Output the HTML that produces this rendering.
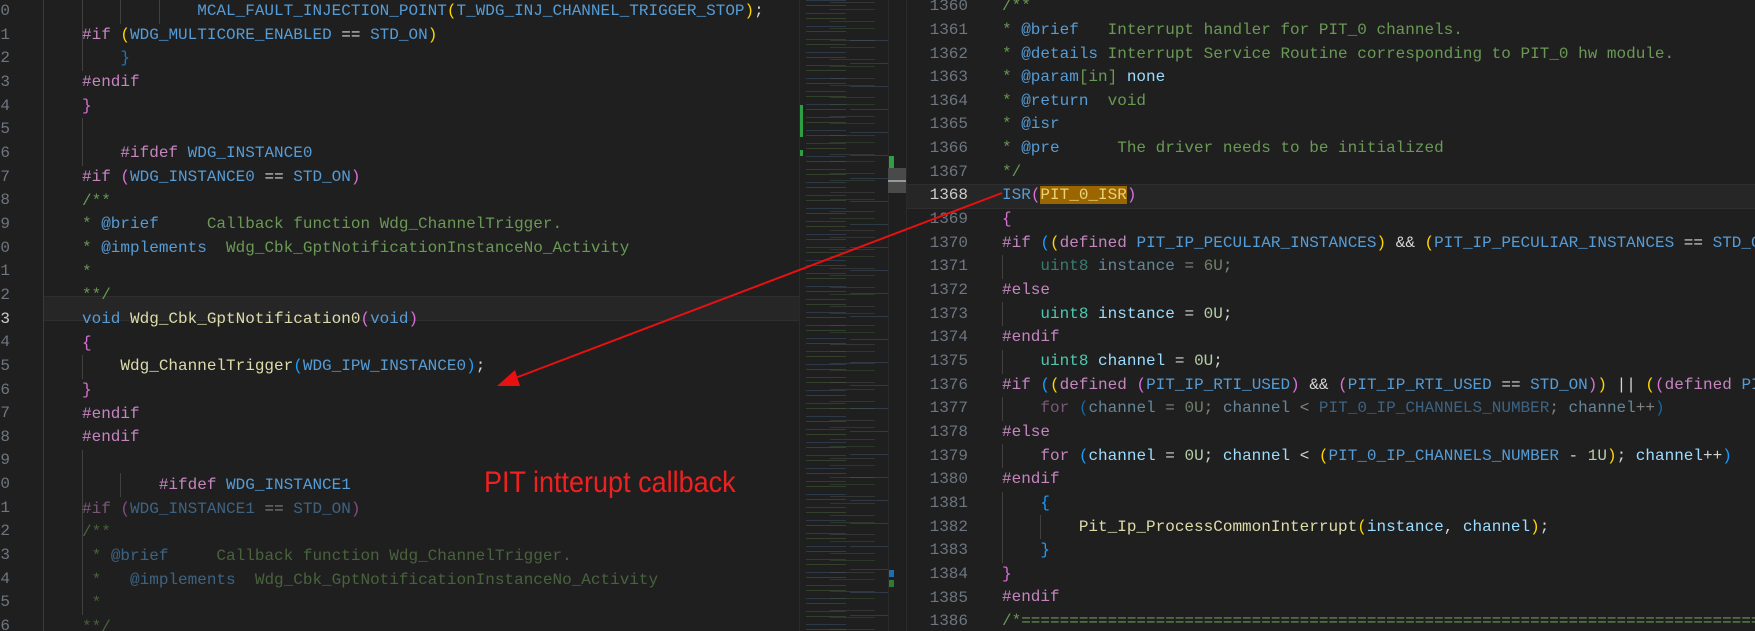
<!DOCTYPE html>
<html><head><meta charset="utf-8"><style>
html,body{margin:0;padding:0;background:#1f1f1f;width:1755px;height:631px;overflow:hidden;position:relative}
.l{position:absolute;white-space:pre;font-family:"Liberation Mono",monospace;font-size:16px;height:23.65px;line-height:23.65px;color:#d4d4d4}
.k{color:#c586c0}.m{color:#569cd6}.f{color:#dcdcaa}.v{color:#9cdcfe}.t{color:#4ec9b0}.n{color:#b5cea8}.c{color:#6a9955}.d{color:#569cd6}
.y{color:#ffd700}.p{color:#da70d6}.b{color:#179fff}
.dim{opacity:.55}
.ln{position:absolute;font-family:"Liberation Mono",monospace;font-size:16px;line-height:23.65px;color:#6e7681;text-align:right}
.g{position:absolute;width:1px;background:#404040}
.mm{position:absolute;height:1px;opacity:.45}
</style></head><body>
<!-- left pane -->
<div style="position:absolute;left:43px;top:0;width:1px;height:631px;background:#3a3a3a"></div>
<div style="position:absolute;left:44px;top:296px;width:755px;height:23px;background:#262626;border-top:1px solid #2e2e2e;border-bottom:1px solid #2e2e2e"></div>
<div class="g" style="left:82px;top:0;height:71px"></div>
<div class="g" style="left:120px;top:0;height:24px"></div>
<div class="g" style="left:159px;top:0;height:24px"></div>
<div class="g" style="left:82px;top:118px;height:48px"></div>
<div class="g" style="left:82px;top:355px;height:24px"></div>
<div class="g" style="left:82px;top:450px;height:95px"></div>
<div class="g" style="left:120px;top:473px;height:24px"></div>
<div class="g" style="left:82px;top:545px;height:70px"></div>
<div class="ln" style="left:-30px;top:0;width:40px">0<br>1<br>2<br>3<br>4<br>5<br>6<br>7<br>8<br>9<br>0<br>1<br>2<br><span style="color:#ccc">3</span><br>4<br>5<br>6<br>7<br>8<br>9<br>0<br>1<br>2<br>3<br>4<br>5<br>6</div>
<div class="l" style="left:82px;top:0px">            <span class="m">MCAL_FAULT_INJECTION_POINT</span><span class="y">(</span><span class="m">T_WDG_INJ_CHANNEL_TRIGGER_STOP</span><span class="y">)</span>;</div>
<div class="l" style="left:82px;top:24px"><span class="k">#if</span> <span class="y">(</span><span class="m">WDG_MULTICORE_ENABLED</span> == <span class="m">STD_ON</span><span class="y">)</span></div>
<div class="l" style="left:82px;top:47px">    <span class="b" style="opacity:.7">}</span></div>
<div class="l" style="left:82px;top:71px"><span class="k">#endif</span></div>
<div class="l" style="left:82px;top:95px"><span class="p">}</span></div>
<div class="l" style="left:82px;top:142px">    <span class="k">#ifdef</span> <span class="m">WDG_INSTANCE0</span></div>
<div class="l" style="left:82px;top:166px"><span class="k">#if</span> <span class="p">(</span><span class="m">WDG_INSTANCE0</span> == <span class="m">STD_ON</span><span class="p">)</span></div>
<div class="l c" style="left:82px;top:190px">/**</div>
<div class="l c" style="left:82px;top:213px">* <span class="d">@brief</span>     Callback function Wdg_ChannelTrigger.</div>
<div class="l c" style="left:82px;top:237px">* <span class="d">@implements</span>  Wdg_Cbk_GptNotificationInstanceNo_Activity</div>
<div class="l c" style="left:82px;top:261px">*</div>
<div class="l c" style="left:82px;top:284px">**/</div>
<div class="l" style="left:82px;top:308px"><span class="m">void</span> <span class="f">Wdg_Cbk_GptNotification0</span><span class="p">(</span><span class="m">void</span><span class="p">)</span></div>
<div class="l" style="left:82px;top:332px"><span class="p">{</span></div>
<div class="l" style="left:82px;top:355px">    <span class="f">Wdg_ChannelTrigger</span><span class="b">(</span><span class="m">WDG_IPW_INSTANCE0</span><span class="b">)</span>;</div>
<div class="l" style="left:82px;top:379px"><span class="p">}</span></div>
<div class="l" style="left:82px;top:403px"><span class="k">#endif</span></div>
<div class="l" style="left:82px;top:426px"><span class="k">#endif</span></div>
<div class="l" style="left:82px;top:474px">        <span class="k">#ifdef</span> <span class="m">WDG_INSTANCE1</span></div>
<div class="l dim" style="left:82px;top:498px"><span class="k">#if</span> <span class="p">(</span><span class="m">WDG_INSTANCE1</span> == <span class="m">STD_ON</span><span class="p">)</span></div>
<div class="l dim c" style="left:82px;top:521px">/**</div>
<div class="l dim c" style="left:82px;top:545px"> * <span class="d">@brief</span>     Callback function Wdg_ChannelTrigger.</div>
<div class="l dim c" style="left:82px;top:569px"> *   <span class="d">@implements</span>  Wdg_Cbk_GptNotificationInstanceNo_Activity</div>
<div class="l dim c" style="left:82px;top:592px"> *</div>
<div class="l dim c" style="left:82px;top:616px">**/</div>
<!-- minimap -->
<div style="position:absolute;left:799px;top:0;width:1px;height:631px;background:#2a2a2a"></div>
<div style="position:absolute;left:806px;top:0;width:40px;height:631px;background:repeating-linear-gradient(180deg,#3d5a7a 0 1px,transparent 1px 5px,#4a6a3a 5px 6px,transparent 6px 13px);opacity:.45"></div>
<div style="position:absolute;left:830px;top:2px;width:45px;height:629px;background:repeating-linear-gradient(180deg,#555 0 1px,transparent 1px 7px,#3f5f3a 7px 8px,transparent 8px 19px);opacity:.4"></div>
<div style="position:absolute;left:850px;top:40px;width:38px;height:590px;background:repeating-linear-gradient(180deg,#4c6c8c 0 1px,transparent 1px 23px);opacity:.35"></div>
<div style="position:absolute;left:800px;top:105px;width:3px;height:32px;background:#2ea043"></div>
<div style="position:absolute;left:800px;top:133px;width:3px;height:4px;background:#2ea043"></div>
<div style="position:absolute;left:800px;top:150px;width:3px;height:6px;background:#2ea043"></div>
<div style="position:absolute;left:888px;top:0;width:18px;height:631px;background:#1f1f1f;border-left:1px solid #2a2a2a"></div>
<div style="position:absolute;left:889px;top:156px;width:5px;height:17px;background:#2ea043"></div>
<div style="position:absolute;left:888px;top:168px;width:18px;height:25px;background:#4a4a4a"></div>
<div style="position:absolute;left:888px;top:180px;width:18px;height:2px;background:#999"></div>
<div style="position:absolute;left:889px;top:570px;width:5px;height:7px;background:#1f6fb0"></div>
<div style="position:absolute;left:889px;top:580px;width:5px;height:7px;background:#2e7d32"></div>
<div style="position:absolute;left:906px;top:0;width:1px;height:631px;background:#2a2a2a"></div>
<!-- right pane -->
<div style="position:absolute;left:907px;top:184px;width:848px;height:23px;background:#262626;border-top:1px solid #2e2e2e;border-bottom:1px solid #2e2e2e"></div>
<div class="ln" style="left:900px;top:-4.8px;width:68px">1360<br>1361<br>1362<br>1363<br>1364<br>1365<br>1366<br>1367<br><span style="color:#ccc">1368</span><br>1369<br>1370<br>1371<br>1372<br>1373<br>1374<br>1375<br>1376<br>1377<br>1378<br>1379<br>1380<br>1381<br>1382<br>1383<br>1384<br>1385<br>1386</div>
<div class="g" style="left:1002px;top:255px;height:24px"></div>
<div class="g" style="left:1002px;top:302px;height:24px"></div>
<div class="g" style="left:1002px;top:350px;height:24px"></div>
<div class="g" style="left:1002px;top:397px;height:24px"></div>
<div class="g" style="left:1002px;top:444px;height:24px"></div>
<div class="g" style="left:1002px;top:492px;height:71px"></div>
<div class="g" style="left:1040px;top:515px;height:24px"></div>
<div class="l c" style="left:1002px;top:-4.8px">/**</div>
<div class="l c" style="left:1002px;top:18.8px">* <span class="d">@brief</span>   Interrupt handler for PIT_0 channels.</div>
<div class="l c" style="left:1002px;top:42.5px">* <span class="d">@details</span> Interrupt Service Routine corresponding to PIT_0 hw module.</div>
<div class="l c" style="left:1002px;top:66.1px">* <span class="d">@param</span>[in] <span class="v">none</span></div>
<div class="l c" style="left:1002px;top:89.8px">* <span class="d">@return</span>  void</div>
<div class="l c" style="left:1002px;top:113.4px">* <span class="d">@isr</span></div>
<div class="l c" style="left:1002px;top:137.1px">* <span class="d">@pre</span>      The driver needs to be initialized</div>
<div class="l c" style="left:1002px;top:160.7px">*/</div>
<div class="l" style="left:1002px;top:184.4px"><span class="m">ISR</span><span class="p">(</span><span style="background:#9b6500;color:#e8d27a">PIT_0_ISR</span><span class="p">)</span></div>
<div class="l" style="left:1002px;top:208px"><span class="p">{</span></div>
<div class="l" style="left:1002px;top:231.7px;width:753px;overflow:hidden"><span class="k">#if</span> <span class="b">(</span><span class="y">(</span><span class="k">defined</span> <span class="m">PIT_IP_PECULIAR_INSTANCES</span><span class="y">)</span> &amp;&amp; <span class="y">(</span><span class="m">PIT_IP_PECULIAR_INSTANCES</span> == <span class="m">STD_ON</span><span class="y">)</span><span class="b">)</span></div>
<div class="l dim" style="left:1002px;top:255.3px">    <span class="t">uint8</span> <span class="v">instance</span> = <span class="n">6U</span>;</div>
<div class="l" style="left:1002px;top:279px"><span class="k">#else</span></div>
<div class="l" style="left:1002px;top:302.6px">    <span class="t">uint8</span> <span class="v">instance</span> = <span class="n">0U</span>;</div>
<div class="l" style="left:1002px;top:326.3px"><span class="k">#endif</span></div>
<div class="l" style="left:1002px;top:349.9px">    <span class="t">uint8</span> <span class="v">channel</span> = <span class="n">0U</span>;</div>
<div class="l" style="left:1002px;top:373.6px;width:753px;overflow:hidden"><span class="k">#if</span> <span class="b">(</span><span class="y">(</span><span class="k">defined</span> <span class="p">(</span><span class="m">PIT_IP_RTI_USED</span><span class="p">)</span> &amp;&amp; <span class="p">(</span><span class="m">PIT_IP_RTI_USED</span> == <span class="m">STD_ON</span><span class="p">)</span><span class="y">)</span> || <span class="y">(</span><span class="p">(</span><span class="k">defined</span> <span class="m">PIT_IP_</span></div>
<div class="l dim" style="left:1002px;top:397.2px">    <span class="k">for</span> <span class="b">(</span><span class="v">channel</span> = <span class="n">0U</span>; <span class="v">channel</span> &lt; <span class="m">PIT_0_IP_CHANNELS_NUMBER</span>; <span class="v">channel</span>++<span class="b">)</span></div>
<div class="l" style="left:1002px;top:420.9px"><span class="k">#else</span></div>
<div class="l" style="left:1002px;top:444.5px">    <span class="k">for</span> <span class="b">(</span><span class="v">channel</span> = <span class="n">0U</span>; <span class="v">channel</span> &lt; <span class="y">(</span><span class="m">PIT_0_IP_CHANNELS_NUMBER</span> - <span class="n">1U</span><span class="y">)</span>; <span class="v">channel</span>++<span class="b">)</span></div>
<div class="l" style="left:1002px;top:468.2px"><span class="k">#endif</span></div>
<div class="l" style="left:1002px;top:491.8px">    <span class="b">{</span></div>
<div class="l" style="left:1002px;top:515.5px">        <span class="f">Pit_Ip_ProcessCommonInterrupt</span><span class="y">(</span><span class="v">instance</span>, <span class="v">channel</span><span class="y">)</span>;</div>
<div class="l" style="left:1002px;top:539.1px">    <span class="b">}</span></div>
<div class="l" style="left:1002px;top:562.8px"><span class="p">}</span></div>
<div class="l" style="left:1002px;top:586.4px"><span class="k">#endif</span></div>
<div class="l c" style="left:1002px;top:610.1px;width:753px;overflow:hidden">/*==============================================================================</div>
<!-- annotation -->
<svg style="position:absolute;left:0;top:0" width="1755" height="631">
<line x1="1002" y1="193" x2="510" y2="380" stroke="#e81010" stroke-width="2"/>
<polygon points="497,386 515,370 520,386" fill="#e81010"/>
</svg>
<div style="position:absolute;left:484px;top:466px;font-family:'Liberation Sans',sans-serif;font-size:30px;color:#f02020;white-space:nowrap;transform:scaleX(0.9);transform-origin:left top">PIT intterupt callback</div>
</body></html>
